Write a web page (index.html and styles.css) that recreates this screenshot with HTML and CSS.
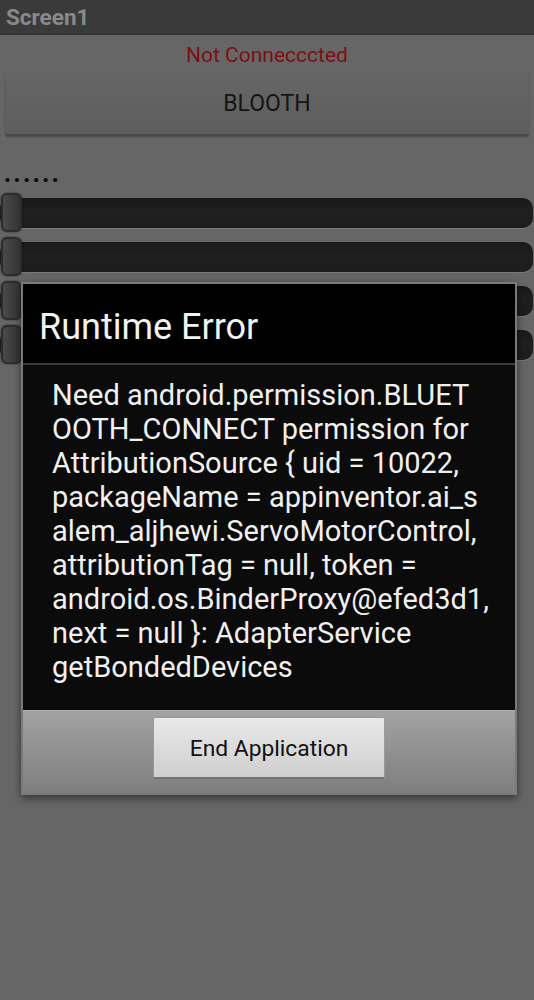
FILE: index.html
```html
<!DOCTYPE html>
<html>
<head>
<meta charset="utf-8">
<link rel="stylesheet" href="styles.css">
</head>
<body>
<div class="screen">
  <div class="titlebar">Screen1</div>
  <div class="content">
    <div class="status">Not Connecccted</div>
    <div class="blooth">BLOOTH</div>
    <div class="dots">......</div>
    <div class="sliders">
      <div class="slider"><div class="track"></div><div class="thumb"></div></div>
      <div class="slider"><div class="track"></div><div class="thumb"></div></div>
      <div class="slider"><div class="track"></div><div class="thumb"></div></div>
      <div class="slider"><div class="track"></div><div class="thumb"></div></div>
    </div>
  </div>
  <div class="dialog">
    <div class="dlg-title">Runtime Error</div>
    <div class="dlg-body">Need android.permission.BLUET<br>OOTH_CONNECT permission for<br>AttributionSource { uid = 10022,<br>packageName = appinventor.ai_s<br>alem_aljhewi.ServoMotorControl,<br>attributionTag = null, token =<br>android.os.BinderProxy@efed3d1,<br>next = null }: AdapterService<br>getBondedDevices</div>
    <div class="dlg-actions"><div class="dlg-btn">End Application</div></div>
  </div>
</div>
</body>
</html>
```
FILE: styles.css
```css
html, body {
  margin: 0;
  padding: 0;
  background: #666666;
  font-family: Roboto, "Noto Sans", sans-serif;
}
.screen {
  position: relative;
  width: 534px;
  height: 1000px;
  overflow: hidden;
  background: #666666;
}
.titlebar {
  height: 35px;
  background: #3a3a3a;
  color: #8a8a8a;
  font-weight: bold;
  font-size: 22.5px;
  line-height: 35px;
  padding-left: 6px;
  box-sizing: border-box;
  border-bottom: 1px solid #2e2e2e;
}
.content {
  display: flex;
  flex-direction: column;
}
.status {
  text-align: center;
  color: #7e1010;
  font-size: 21px;
  height: 38px;
  line-height: 40px;
}
.blooth {
  margin: 0 5px;
  height: 63px;
  line-height: 62px;
  text-align: center;
  font-size: 23px;
  color: #151515;
  background: linear-gradient(#656565, #5e5e5e);
  border-radius: 2px;
  border-bottom: 2px solid #4a4a4a;
  box-sizing: border-box;
  box-shadow: 0 1px 2px rgba(0,0,0,0.3);
}
.dots {
  margin-top: 32px;
  padding-left: 4px;
  height: 20px;
  line-height: 14px;
  font-size: 23px;
  font-weight: 900;
  color: #0e0e0e;
  letter-spacing: 2.6px;
}
.sliders {
  display: flex;
  flex-direction: column;
  gap: 6px;
  margin-top: 6px;
}
.slider {
  position: relative;
  height: 38px;
  display: flex;
  align-items: center;
}
.track {
  flex: 1;
  height: 30px;
  background: linear-gradient(#181818, #202020 40%, #1c1c1c);
  border-radius: 10px;
  margin-right: 1px;
  box-shadow: 0 1px 0 #7a7a7a;
}
.thumb {
  position: absolute;
  left: 1px;
  top: -1px;
  width: 21px;
  height: 39px;
  box-sizing: border-box;
  border-radius: 6px;
  border: 2px solid #2c2c2c;
  background: linear-gradient(90deg, #4a4a4a, #3c3c3c 60%, #333);
  box-shadow: 0 0 2px rgba(0,0,0,0.6);
}
.dialog {
  position: absolute;
  top: 282px;
  left: 21px;
  width: 496px;
  box-sizing: border-box;
  border: 2px solid #7a7a7a;
  box-shadow: 0 3px 8px rgba(0,0,0,0.5);
  background: #0b0b0b;
}
.dlg-title {
  height: 79px;
  background: #000;
  color: #f2f2f2;
  font-size: 36px;
  line-height: 86px;
  padding-left: 16px;
  border-bottom: 2px solid #3c3c3c;
}
.dlg-body {
  background: #0b0b0b;
  color: #f0f0f0;
  font-size: 29px;
  line-height: 34px;
  padding: 13px 10px 26px 29px;
  white-space: nowrap;
}
.dlg-actions {
  height: 83px;
  background: linear-gradient(#a2a2a2, #7e7e7e);
  border-top: 1px solid #b0b0b0;
  display: flex;
  justify-content: center;
  align-items: flex-start;
  padding-top: 6px;
  box-sizing: border-box;
}
.dlg-btn {
  margin-left: 0;
  width: 232px;
  height: 62px;
  line-height: 62px;
  text-align: center;
  font-size: 22.8px;
  color: #111;
  background: linear-gradient(#e8e8e8, #cfcfcf);
  border: 1px solid #9a9a9a;
  border-bottom: 2px solid #707070;
  box-sizing: border-box;
  border-radius: 2px;
}
```
